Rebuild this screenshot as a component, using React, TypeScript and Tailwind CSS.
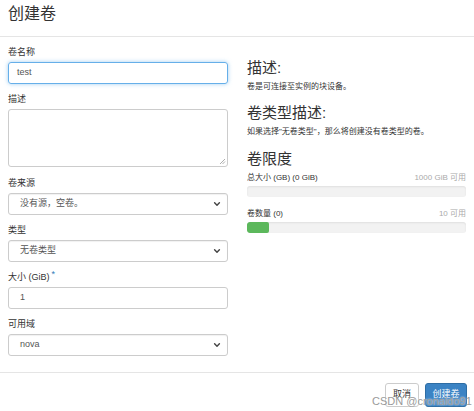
import React from 'react';

const font = { fontFamily: '"Liberation Sans", "Noto Sans CJK SC", sans-serif' };

function Chevron() {
  return (
    <svg width="8" height="8" viewBox="0 0 10 10" className="absolute right-[6px] top-1/2 -translate-y-1/2">
      <path d="M2 3.5 L5 6.5 L8 3.5" fill="none" stroke="#444" strokeWidth="1.8" strokeLinecap="round" strokeLinejoin="round" />
    </svg>
  );
}

function Field({ label, required, children, last }: { label: string; required?: boolean; children: React.ReactNode; last?: boolean }) {
  return (
    <div className={last ? '' : 'mb-[8px]'}>
      <div className="h-[14px] leading-[14px] text-[9px] text-[#333] mb-[3px]">
        {label}
        {required && <span className="text-[#337ab7] text-[9px] relative -top-[3px] ml-[2px]">*</span>}
      </div>
      {children}
    </div>
  );
}

function Select({ value }: { value: string }) {
  return (
    <div className="relative h-[22px] border border-[#ccc] rounded-[3px] bg-white flex items-center pl-[11px] text-[9px] text-[#555] shadow-[inset_0_1px_1px_rgba(0,0,0,0.06)]">
      {value}
      <Chevron />
    </div>
  );
}

function Bar({ label, right, fill }: { label: string; right: string; fill?: number }) {
  return (
    <div className="mb-[11px]">
      <div className="flex justify-between text-[8px] leading-[12px] mb-[2px]">
        <span className="text-[#333]">{label}</span>
        <span className="text-[#aaa]">{right}</span>
      </div>
      <div className="h-[11px] bg-[#f2f2f2] rounded-[3px] overflow-hidden shadow-[inset_0_1px_2px_rgba(0,0,0,0.08)]">
        {fill ? <div className="h-full bg-[#5cb85c] rounded-[2px]" style={{ width: fill }} /> : null}
      </div>
    </div>
  );
}

export default function App() {
  return (
    <div className="relative w-[474px] h-[411px] bg-white overflow-hidden" style={font}>
      {/* header */}
      <div className="h-[37px] border-b border-[#e5e5e5] px-[8px] pt-[4px]">
        <h1 className="text-[16px] leading-[20px] text-[#333]">创建卷</h1>
      </div>

      {/* body */}
      <div className="h-[335px] flex px-[8px] pt-[8px]">
        <div className="w-[220px]">
          <Field label="卷名称">
            <div className="h-[22px] border border-[#66afe9] rounded-[3px] flex items-center pl-[8px] text-[9px] text-[#555] shadow-[0_0_4px_rgba(102,175,233,0.6)]">
              test
            </div>
          </Field>
          <div className="mb-[9px]">
            <div className="h-[14px] leading-[14px] text-[9px] text-[#333] mb-[3px]">描述</div>
            <div className="relative h-[58px] border border-[#ccc] rounded-[3px]">
              <svg width="7" height="7" viewBox="0 0 7 7" className="absolute right-[1px] bottom-[1px]">
                <path d="M6 1 L1 6 M6 3.5 L3.5 6" stroke="#999" strokeWidth="0.8" />
              </svg>
            </div>
          </div>
          <Field label="卷来源">
            <Select value="没有源，空卷。" />
          </Field>
          <Field label="类型">
            <Select value="无卷类型" />
          </Field>
          <Field label="大小 (GiB)" required>
            <div className="h-[22px] border border-[#ccc] rounded-[3px] flex items-center pl-[11px] text-[9px] text-[#555]">1</div>
          </Field>
          <Field label="可用域" last>
            <Select value="nova" />
          </Field>
        </div>

        <div className="flex-1 ml-[19px] pt-[14px]">
          <div className="text-[15px] leading-[18px] text-[#333]">描述:</div>
          <div className="text-[8px] leading-[12px] text-[#333] mt-[4px]">卷是可连接至实例的块设备。</div>
          <div className="text-[15px] leading-[18px] text-[#333] mt-[11px]">卷类型描述:</div>
          <div className="text-[8px] leading-[12px] text-[#333] mt-[4px] whitespace-nowrap">如果选择"无卷类型"，那么将创建没有卷类型的卷。</div>
          <div className="text-[15px] leading-[18px] text-[#333] mt-[12px] mb-[4px]">卷限度</div>
          <Bar label="总大小 (GB) (0 GiB)" right="1000 GiB 可用" />
          <Bar label="卷数量 (0)" right="10 可用" fill={22} />
        </div>
      </div>

      {/* footer */}
      <div className="border-t border-[#e5e5e5] flex justify-end gap-[6px] px-[7px] pt-[10px]">
        <button className="h-[24px] w-[34px] border border-[#ccc] rounded-[3px] bg-white text-[9px] text-[#333]">取消</button>
        <button className="h-[24px] w-[42px] border border-[#2e6da4] rounded-[3px] bg-[#3b83c4] text-[9px] text-white">创建卷</button>
      </div>

      <span className="absolute left-[372px] top-[394px] whitespace-nowrap text-[11px] leading-[14px] text-[#9a9a9a] [text-shadow:0_0_2px_#fff]">
        CSDN @cronaldo91
      </span>
    </div>
  );
}
